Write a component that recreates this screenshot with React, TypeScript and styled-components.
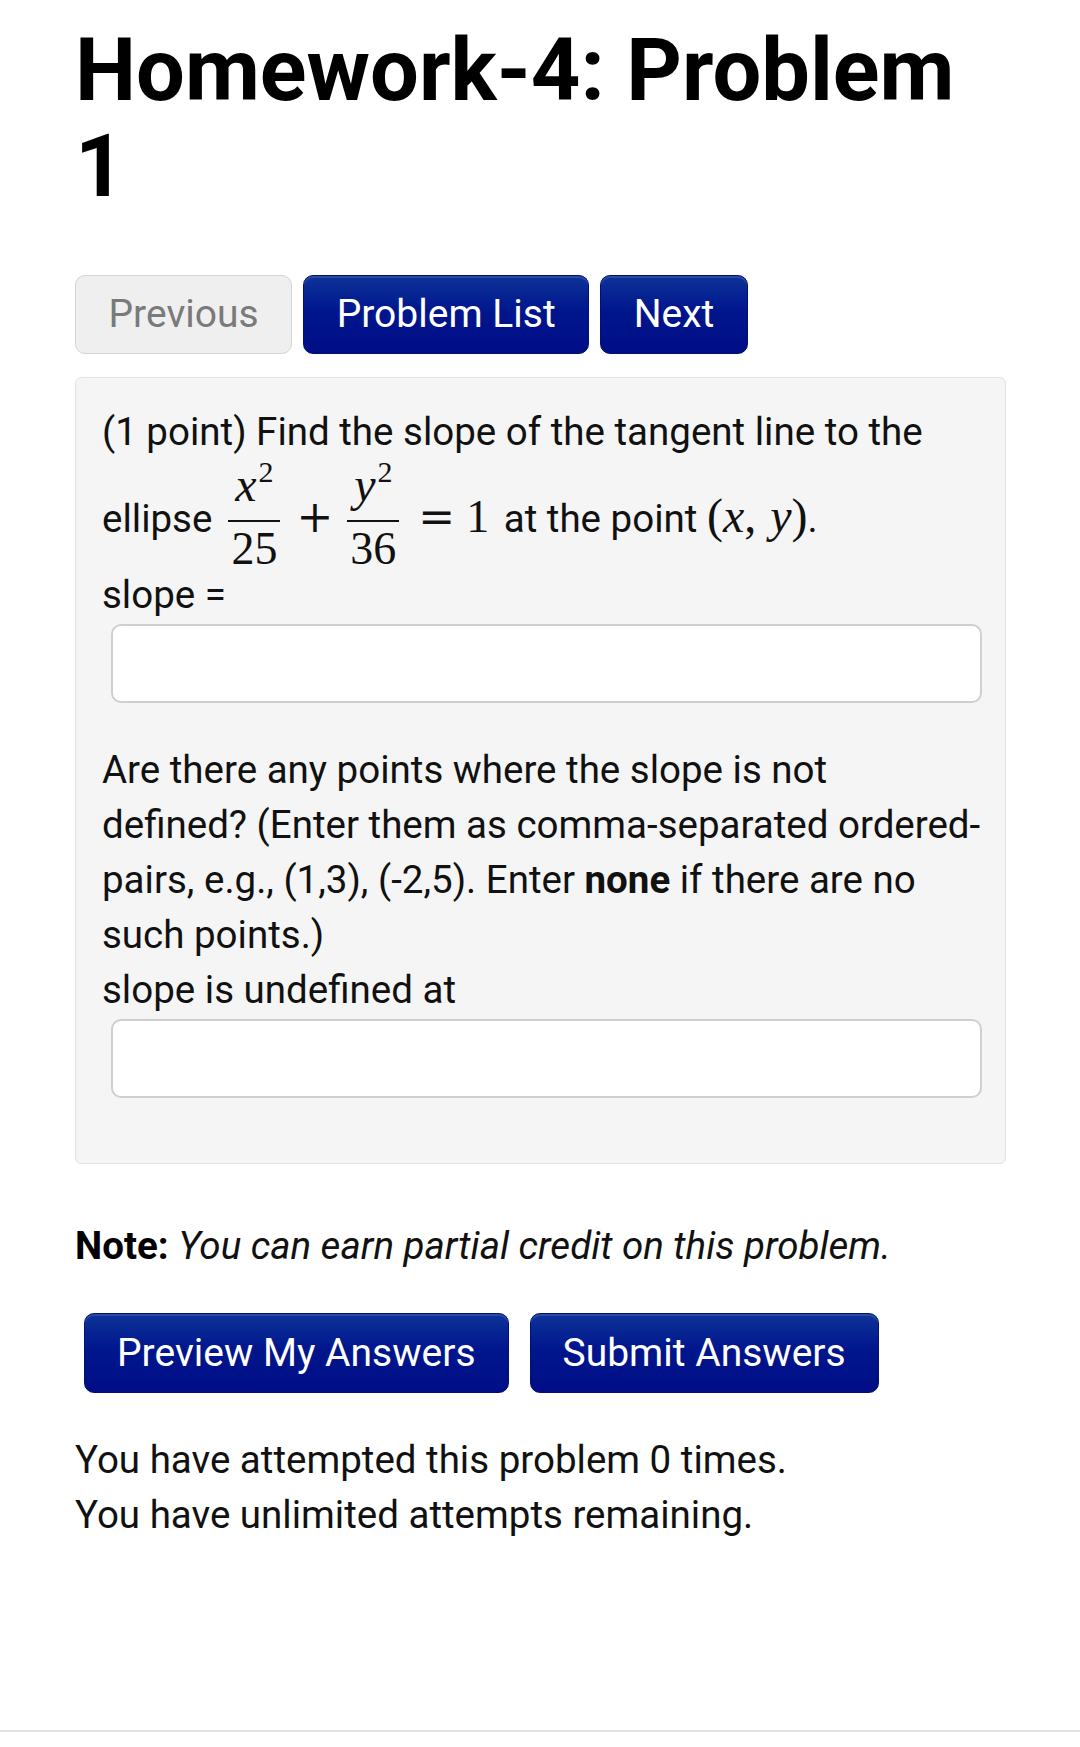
import React from "react";
import styled, { createGlobalStyle } from "styled-components";

const Global = createGlobalStyle`
  html, body { margin: 0; padding: 0; background: #ffffff; }
  body { font-family: Roboto, "Noto Sans", "Liberation Sans", sans-serif; color: #111; }
  * { box-sizing: border-box; }
`;

const Page = styled.div`
  width: 1080px;
  padding: 23px 74px 0 75px;
`;

const Title = styled.h1`
  margin: 0;
  font-family: Roboto, "Liberation Sans", sans-serif;
  font-weight: 700;
  font-size: 86.5px;
  line-height: 96px;
  color: #000;
`;

const Nav = styled.div`
  display: flex;
  gap: 11px;
  margin-top: 60px;
`;

const Button = styled.button<{ $disabled?: boolean }>`
  height: 79px;
  padding: 0 32.5px;
  font-family: Roboto, "Liberation Sans", sans-serif;
  font-size: 39px;
  line-height: 77px;
  border-radius: 10px;
  cursor: pointer;
  white-space: nowrap;
  ${(p) =>
    p.$disabled
      ? `
    background: #efefef;
    border: 1px solid #d4d4d4;
    color: #7a7a7a;
  `
      : `
    background: linear-gradient(to bottom, #0d3399 0%, #00168d 45%, #000d86 100%);
    border: 1px solid #00126e;
    color: #ffffff;
    box-shadow: inset 0 2px 0 rgba(255,255,255,0.12);
  `}
`;

const Panel = styled.div`
  margin-top: 23px;
  background: #f5f5f5;
  border: 1px solid #e2e2e2;
  border-radius: 6px;
  padding: 26px 22px 65px 26px;
  font-size: 38.5px;
  line-height: 55px;
  color: #111;
`;

const Para = styled.div<{ $gap?: number }>`
  margin-top: ${(p) => p.$gap ?? 0}px;
`;

const AnswerBox = styled.input`
  display: block;
  width: 871px;
  height: 79px;
  margin: 2px 0 0 9px;
  background: #ffffff;
  border: 2px solid #cfcfcf;
  border-radius: 10px;
  font-size: 38px;
  padding: 0 12px;
  outline: none;
`;

const MathFrac = styled.span<{ $l?: number }>`
  display: inline-block;
  vertical-align: -32px;
  text-align: center;
  margin-left: ${(p) => p.$l ?? 0}px;
  font-family: "Liberation Serif", "DejaVu Serif", serif;
  font-size: 46px;
`;

const FracNum = styled.span`
  display: block;
  line-height: 52px;
  padding: 0 3px;
  white-space: nowrap;
`;

const FracBar = styled.span`
  display: block;
  border-top: 2px solid #111;
  margin: 8px 0 9px;
`;

const FracDen = styled.span`
  display: block;
  line-height: 36px;
  padding: 0 3px;
`;

const MathVar = styled.i`
  font-family: "Liberation Serif", "DejaVu Serif", serif;
  font-style: italic;
  font-size: 48px;
`;

const MathSup = styled.sup`
  font-family: "Liberation Serif", "DejaVu Serif", serif;
  font-size: 30px;
  vertical-align: 19px;
  line-height: 0;
  margin-left: 2px;
`;

const MathNum = styled.span<{ $l?: number; $r?: number }>`
  font-family: "Liberation Serif", "DejaVu Serif", serif;
  font-size: 46px;
  margin: 0 ${(p) => p.$r ?? 0}px 0 ${(p) => p.$l ?? 0}px;
`;

const MathOp = styled.span<{ $l?: number; $r?: number }>`
  font-family: "DejaVu Serif", "Liberation Serif", serif;
  font-size: 44px;
  margin: 0 ${(p) => p.$r ?? 0}px 0 ${(p) => p.$l ?? 0}px;
`;

const MathPunct = styled.span<{ $r?: number }>`
  font-family: "Liberation Serif", "DejaVu Serif", serif;
  font-size: 48px;
  margin-right: ${(p) => p.$r ?? 0}px;
`;

const Note = styled.p`
  margin: 54px 0 0 0;
  font-size: 38.5px;
  line-height: 55px;
  color: #111;
  b { font-weight: 700; color: #000; }
  i { font-style: italic; }
`;

const Actions = styled.div`
  display: flex;
  gap: 21px;
  margin: 40px 0 0 9px;
`;

const ActionButton = styled(Button)`
  height: 80px;
  padding: 0 32px;
`;

const Attempts = styled.p`
  margin: 39px 0 0 0;
  font-size: 38.5px;
  line-height: 55px;
  color: #111;
`;

const Rule = styled.hr`
  margin: 188px 0 0 -75px;
  border: none;
  border-top: 2px solid #e2e2e2;
  width: 1080px;
`;

export default function App() {
  return (
    <>
      <Global />
      <Page>
        <Title>Homework-4: Problem 1</Title>
        <Nav>
          <Button $disabled>Previous</Button>
          <Button>Problem List</Button>
          <Button>Next</Button>
        </Nav>
        <Panel>
          <Para>
            (1 point) Find the slope of the tangent line to the ellipse
            <MathFrac $l={16}>
              <FracNum>
                <MathVar>x</MathVar>
                <MathSup>2</MathSup>
              </FracNum>
              <FracBar />
              <FracDen>25</FracDen>
            </MathFrac>
            <MathOp $l={16} $r={14}>+</MathOp>
            <MathFrac>
              <FracNum>
                <MathVar>y</MathVar>
                <MathSup>2</MathSup>
              </FracNum>
              <FracBar />
              <FracDen>36</FracDen>
            </MathFrac>
            <MathOp $l={19} $r={11}>=</MathOp>
            <MathNum $r={5}>1</MathNum> at the point{" "}
            <MathPunct>(</MathPunct>
            <MathVar>x</MathVar>
            <MathPunct $r={14}>,</MathPunct>
            <MathVar>y</MathVar>
            <MathPunct>)</MathPunct>.
          </Para>
          <Para>slope =</Para>
          <AnswerBox type="text" aria-label="slope" />
          <Para $gap={39}>
            Are there any points where the slope is not
            <br />
            defined? (Enter them as comma-separated ordered-pairs, e.g., (1,3),
            (-2,5). Enter <b>none</b> if there are no such points.)
          </Para>
          <Para>slope is undefined at</Para>
          <AnswerBox type="text" aria-label="slope is undefined at" />
        </Panel>
        <Note>
          <b>Note:</b> <i>You can earn partial credit on this problem.</i>
        </Note>
        <Actions>
          <ActionButton>Preview My Answers</ActionButton>
          <ActionButton>Submit Answers</ActionButton>
        </Actions>
        <Attempts>
          You have attempted this problem 0 times.
          <br />
          You have unlimited attempts remaining.
        </Attempts>
        <Rule />
      </Page>
    </>
  );
}
